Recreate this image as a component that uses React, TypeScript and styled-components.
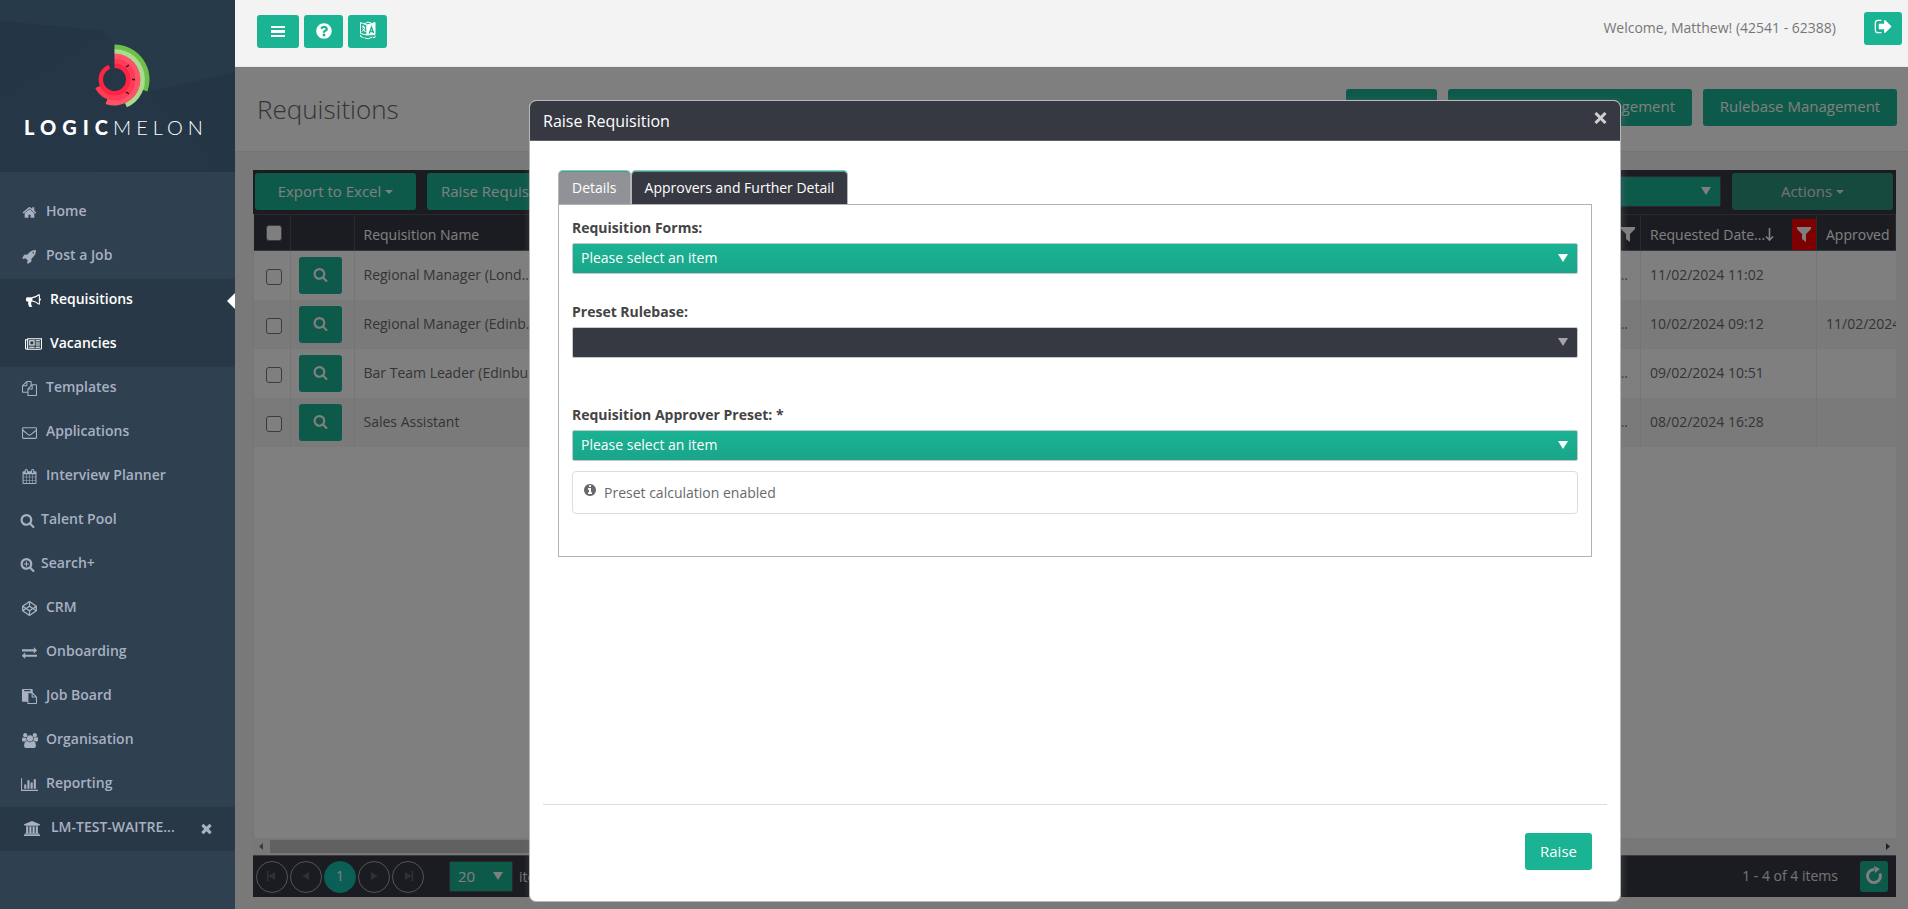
import React from 'react';
import styled, { createGlobalStyle, css } from 'styled-components';
import { FaCodepen, FaQuestionCircle } from 'react-icons/fa';

const green = '#1ab394';
const dark = '#373942';

const GlobalStyle = createGlobalStyle`
  *, *::before, *::after { box-sizing: border-box; }
  body {
    margin: 0;
    background: #2f4050;
    color: #676a6c;
    font-family: 'Open Sans', 'Noto Sans', sans-serif;
    font-size: 14px;
    line-height: 20px;
  }
  button, select, input { font: inherit; margin: 0; }
  ul { list-style: none; margin: 0; padding: 0; }
`;

/* ---------- icons ---------- */

const paths = {
  home: 'M1472 992v480q0 26-19 45t-45 19h-384v-384h-256v384h-384q-26 0-45-19t-19-45v-480q0-1 .5-3t.5-3l575-474 575 474q1 2 1 6zm223-69l-62 74q-8 9-21 11h-3q-13 0-21-7l-692-577-692 577q-12 8-24 7-13-2-21-11l-62-74q-8-10-7-23.5t11-21.5l719-599q32-26 76-26t76 26l244 204v-195q0-14 9-23t23-9h192q14 0 23 9t9 23v408l219 182q10 8 11 21.5t-7 23.5z',
  rocket: 'M1440 448q0-40-28-68t-68-28-68 28-28 68 28 68 68 28 68-28 28-68zm224-288q0 249-75.5 430.5t-253.5 360.5q-81 80-195 176l-20 379q-2 16-16 26l-384 224q-7 4-16 4-12 0-23-9l-64-64q-13-14-8-32l85-276-281-281-276 85q-3 1-9 1-14 0-23-9l-64-64q-17-19-5-39l224-384q10-14 26-16l379-20q96-114 176-195 188-187 358-258t431-71q14 0 24 9.5t10 22.5z',
  bullhorn: 'M1664 640q53 0 90.5 37.5t37.5 90.5-37.5 90.5-90.5 37.5v384q0 52-38 90t-90 38q-417-347-812-380-58 19-91 66t-31 100.5 40 92.5q-20 33-23 65.5t6 58 33.5 55 48 50 61.5 50.5q-29 58-111.5 83t-168.5 11.5-132-55.5q-7-23-29.5-87.5t-32-94.5-23-89-15-101 3.5-98.5 22-110.5h-122q-66 0-113-47t-47-113v-192q0-66 47-113t113-47h480q435 0 896-384 52 0 90 38t38 90v384zm-128 604v-954q-394 302-768 343v270q377 42 768 341z',
  newspaper: 'M1024 512h-384v384h384v-384zm128 640v128h-640v-128h640zm0-768v640h-640v-640h640zm640 768v128h-512v-128h512zm0-256v128h-512v-128h512zm0-256v128h-512v-128h512zm0-256v128h-512v-128h512zm-1536 960v-960h-128v960q0 26 19 45t45 19 45-19 19-45zm1664 0v-1088h-1536v1088q0 33-11 64h1483q26 0 45-19t19-45zm128-1216v1216q0 80-56 136t-136 56h-1664q-80 0-136-56t-56-136v-1088h256v-128h1792z',
  files: 'M1696 384q40 0 68 28t28 68v1216q0 40-28 68t-68 28h-960q-40 0-68-28t-28-68v-288h-544q-40 0-68-28t-28-68v-672q0-40 20-88t48-76l408-408q28-28 76-48t88-20h416q40 0 68 28t28 68v328q68-40 128-40h416zm-544 213l-299 299h299v-299zm-640-384l-299 299h299v-299zm196 647l316-316v-416h-384v416q0 40-28 68t-68 28h-416v640h512v-256q0-40 20-88t48-76zm956 804v-1152h-384v416q0 40-28 68t-68 28h-416v640h896z',
  envelope: 'M1664 1504v-768q-32 36-69 66-268 206-426 338-51 43-83 67t-86.5 48.5-102.5 24.5h-2q-48 0-102.5-24.5t-86.5-48.5-83-67q-158-132-426-338-37-30-69-66v768q0 13 9.5 22.5t22.5 9.5h1472q13 0 22.5-9.5t9.5-22.5zm0-1051v-24.5l-.5-13-3-12.5-5.5-9-9-7.5-14-2.5h-1472q-13 0-22.5 9.5t-9.5 22.5q0 168 147 284 193 152 401 317 6 5 35 29.5t46 37.5 44.5 31.5 50.5 27.5 43 9h2q20 0 43-9t50.5-27.5 44.5-31.5 46-37.5 35-29.5q208-165 401-317 54-43 100.5-115.5t46.5-131.5zm128-37v1088q0 66-47 113t-113 47h-1472q-66 0-113-47t-47-113v-1088q0-66 47-113t113-47h1472q66 0 113 47t47 113z',
  calendar: 'M192 1664h288v-288h-288v288zm352 0h320v-288h-320v288zm-352-352h288v-320h-288v320zm352 0h320v-320h-320v320zm-352-384h288v-288h-288v288zm736 736h320v-288h-320v288zm-384-736h320v-288h-320v288zm768 736h288v-288h-288v288zm-384-352h320v-320h-320v320zm-352-864v-288q0-13-9.5-22.5t-22.5-9.5h-64q-13 0-22.5 9.5t-9.5 22.5v288q0 13 9.5 22.5t22.5 9.5h64q13 0 22.5-9.5t9.5-22.5zm736 864h288v-320h-288v320zm-384-384h320v-288h-320v288zm384 0h288v-288h-288v288zm32-480v-288q0-13-9.5-22.5t-22.5-9.5h-64q-13 0-22.5 9.5t-9.5 22.5v288q0 13 9.5 22.5t22.5 9.5h64q13 0 22.5-9.5t9.5-22.5zm384-64v1280q0 52-38 90t-90 38h-1408q-52 0-90-38t-38-90v-1280q0-52 38-90t90-38h128v-96q0-66 47-113t113-47h64q66 0 113 47t47 113v96h384v-96q0-66 47-113t113-47h64q66 0 113 47t47 113v96h128q52 0 90 38t38 90z',
  search: 'M1216 832q0-185-131.5-316.5t-316.5-131.5-316.5 131.5-131.5 316.5 131.5 316.5 316.5 131.5 316.5-131.5 131.5-316.5zm512 832q0 52-38 90t-90 38q-54 0-90-38l-343-342q-179 124-399 124-143 0-273.5-55.5t-225-150-150-225-55.5-273.5 55.5-273.5 150-225 225-150 273.5-55.5 273.5 55.5 225 150 150 225 55.5 273.5q0 220-124 399l343 343q37 37 37 90z',
  searchPlus: 'M1088 800v64q0 13-9.5 22.5t-22.5 9.5h-224v224q0 13-9.5 22.5t-22.5 9.5h-64q-13 0-22.5-9.5t-9.5-22.5v-224h-224q-13 0-22.5-9.5t-9.5-22.5v-64q0-13 9.5-22.5t22.5-9.5h224v-224q0-13 9.5-22.5t22.5-9.5h64q13 0 22.5 9.5t9.5 22.5v224h224q13 0 22.5 9.5t9.5 22.5zm128 32q0-185-131.5-316.5t-316.5-131.5-316.5 131.5-131.5 316.5 131.5 316.5 316.5 131.5 316.5-131.5 131.5-316.5zm512 832q0 53-37.5 90.5t-90.5 37.5q-54 0-90-38l-343-342q-179 124-399 124-143 0-273.5-55.5t-225-150-150-225-55.5-273.5 55.5-273.5 150-225 225-150 273.5-55.5 273.5 55.5 225 150 150 225 55.5 273.5q0 220-124 399l343 343q37 37 37 90z',
  exchange: 'M1792 1184v192q0 13-9.5 22.5t-22.5 9.5h-1376v192q0 13-9.5 22.5t-22.5 9.5q-12 0-24-10l-319-320q-9-9-9-22 0-14 9-23l320-320q9-9 23-9 13 0 22.5 9.5t9.5 22.5v192h1376q13 0 22.5 9.5t9.5 22.5zm0-544q0 14-9 23l-320 320q-9 9-23 9-13 0-22.5-9.5t-9.5-22.5v-192h-1376q-13 0-22.5-9.5t-9.5-22.5v-192q0-13 9.5-22.5t22.5-9.5h1376v-192q0-14 9-23t23-9q12 0 24 10l319 319q9 9 9 23z',
  paste: 'M768 1664h896v-640h-416q-40 0-68-28t-28-68v-416h-384v1152zm256-1440v-64q0-13-9.5-22.5t-22.5-9.5h-704q-13 0-22.5 9.5t-9.5 22.5v64q0 13 9.5 22.5t22.5 9.5h704q13 0 22.5-9.5t9.5-22.5zm256 672h299l-299-299v299zm512 128v672q0 40-28 68t-68 28h-960q-40 0-68-28t-28-68v-160h-544q-40 0-68-28t-28-68v-1344q0-40 28-68t68-28h1088q40 0 68 28t28 68v328q21 13 36 28l408 408q28 28 48 76t20 88z',
  users: 'M593 896q-162 5-265 128h-134q-82 0-138-40.5t-56-118.5q0-353 124-353 6 0 43.5 21t97.5 42.5 119 21.5q67 0 133-23-5 37-5 66 0 159 93 287zm1071 637q0 120-73 189.5t-194 69.5h-874q-121 0-194-69.5t-73-189.5q0-53 3.5-103.5t14-109 26.5-108.5 43-97.5 62-81 85.5-53.5 111.5-20q10 0 43 21.5t73 48 107 48 135 21.5 135-21.5 107-48 73-48 43-21.5q61 0 111.5 20t85.5 53.5 62 81 43 97.5 26.5 108.5 14 109 3.5 103.5zm-1024-1277q0 106-75 181t-181 75-181-75-75-181 75-181 181-75 181 75 75 181zm704 384q0 159-112.5 271.5t-271.5 112.5-271.5-112.5-112.5-271.5 112.5-271.5 271.5-112.5 271.5 112.5 112.5 271.5zm576 225q0 78-56 118.5t-138 40.5h-134q-103-123-265-128 93-128 93-287 0-29-5-66 66 23 133 23 59 0 119-21.5t97.5-42.5 43.5-21q124 0 124 353zm-128-609q0 106-75 181t-181 75-181-75-75-181 75-181 181-75 181 75 75 181z',
  chart: 'M640 896v512h-256v-512h256zm384-512v1024h-256v-1024h256zm1024 1152v128h-2048v-1536h128v1408h1920zm-640-896v768h-256v-768h256zm384-384v1152h-256v-1152h256z',
  bank: 'M960 0l960 384v128h-128q0 26-20.5 45t-48.5 19h-1526q-28 0-48.5-19t-20.5-45h-128v-128zm-704 640h256v768h128v-768h256v768h128v-768h256v768h128v-768h256v768h59q28 0 48.5 19t20.5 45v64h-1664v-64q0-26 20.5-45t48.5-19h59v-768zm1595 960q28 0 48.5 19t20.5 45v128h-1920v-128q0-26 20.5-45t48.5-19h1782z',
  times: 'M1490 1322q0 40-28 68l-136 136q-28 28-68 28t-68-28l-294-294-294 294q-28 28-68 28t-68-28l-136-136q-28-28-28-68t28-68l294-294-294-294q-28-28-28-68t28-68l136-136q28-28 68-28t68 28l294 294 294-294q28-28 68-28t68 28l136 136q28 28 28 68t-28 68l-294 294 294 294q28 28 28 68z',
  signOut: 'M704 1440q0 4 1 20t.5 26.5-3 23.5-10 19.5-20.5 6.5h-320q-119 0-203.5-84.5t-84.5-203.5v-704q0-119 84.5-203.5t203.5-84.5h320q13 0 22.5 9.5t9.5 22.5q0 4 1 20t.5 26.5-3 23.5-10 19.5-20.5 6.5h-320q-66 0-113 47t-47 113v704q0 66 47 113t113 47h312l11.5 1 11.5 3 8 5.5 7 9 2 13.5zm928-544q0 26-19 45l-544 544q-19 19-45 19t-45-19-19-45v-288h-448q-26 0-45-19t-19-45v-384q0-26 19-45t45-19h448v-288q0-26 19-45t45-19 45 19l544 544q19 19 19 45z',
  info: 'M1152 1376v-160q0-14-9-23t-23-9h-96v-512q0-14-9-23t-23-9h-320q-14 0-23 9t-9 23v160q0 14 9 23t23 9h96v320h-96q-14 0-23 9t-9 23v160q0 14 9 23t23 9h448q14 0 23-9t9-23zm-128-896v-160q0-14-9-23t-23-9h-192q-14 0-23 9t-9 23v160q0 14 9 23t23 9h192q14 0 23-9t9-23zm640 416q0 209-103 385.5t-279.5 279.5-385.5 103-385.5-103-279.5-279.5-103-385.5 103-385.5 279.5-279.5 385.5-103 385.5 103 279.5 279.5 103 385.5z',
};

type IconName = keyof typeof paths;

const Icon = ({ name, size = 14, box = 1792 }: { name: IconName; size?: number; box?: number }) => (
  <svg width={Math.round((size * box) / 1792)} height={size} viewBox={`0 0 ${box} 1792`} fill="currentColor" aria-hidden="true">
    <path d={paths[name]} />
  </svg>
);

const Triangle = ({ w = 10, h = 8 }: { w?: number; h?: number }) => (
  <svg width={w} height={h} viewBox="0 0 10 8" preserveAspectRatio="none" fill="currentColor" aria-hidden="true">
    <path d="M0 0h10L5 8z" />
  </svg>
);

const Funnel = () => (
  <svg width="14" height="15" viewBox="0 0 14 15" fill="currentColor" aria-hidden="true">
    <path d="M0 0h14v2L9 7v8l-4-3V7L0 2z" />
  </svg>
);

const TranslateIcon = () => (
  <svg width="18" height="19" viewBox="0 0 18 19" fill="none" stroke="#fff" aria-hidden="true">
    <path d="M1.500 1.500 8 4v10l-6.500-1.500z" />
    <path d="M8 4 16 1.500v12L8 14z" fill="#fff" />
    <path d="m5 3 4-2 3 1M1.500 14v1.500l3 1M5.500 17q3.500 2 8-1M16 14.500v2h-2" />
    <path d="m3 5.500 3 1M4.500 4.500v2M5.800 6.500q-.5 3-3 4M3.500 7.500 6.500 11" />
    <path d="m10.300 12.500 2.200-6.500 2.200 6M11 10.500h3" stroke={green} strokeWidth="1.300" />
  </svg>
);

const RefreshIcon = () => (
  <svg width="18" height="19" viewBox="0 0 18 19" fill="none" aria-hidden="true">
    <path d="M9 3.500A6.500 6.500 0 1 0 15 7.500" stroke="#fff" strokeWidth="3" />
    <path d="m9 0 6 3-5 4z" fill="#fff" />
  </svg>
);

const PagerArrow = ({ flip, bar }: { flip?: boolean; bar?: boolean }) => (
  <svg width="10" height="10" viewBox="0 0 10 10" fill="currentColor" aria-hidden="true">
    <g transform={flip ? 'matrix(-1 0 0 1 10 0)' : undefined}>
      <path d="M8 1v8L1.500 5z" />
      {bar && <path d="M0 0h1.500v10H0z" />}
    </g>
  </svg>
);

/* ---------- shared controls ---------- */

const Button = styled.button<{ $width?: number; $dim?: boolean }>`
  display: inline-flex;
  align-items: center;
  justify-content: center;
  gap: 4px;
  flex: none;
  height: 37px;
  width: ${(p) => (p.$width ? `${p.$width}px` : 'auto')};
  padding: 0 14px 2px;
  border: 0;
  border-radius: 3px;
  background: ${(p) => (p.$dim ? '#2f957f' : green)};
  color: ${(p) => (p.$dim ? '#e4e4e4' : '#fff')};
  font-size: 15px;
  white-space: nowrap;
  > svg { margin-top: 2px; }
`;

const IconButton = styled.button<{ $w: number; $h: number }>`
  display: inline-flex;
  align-items: center;
  justify-content: center;
  flex: none;
  width: ${(p) => p.$w}px;
  height: ${(p) => p.$h}px;
  padding: 0 0 2px;
  border: 0;
  border-radius: 3px;
  background: ${green};
  color: #fff;
`;

const SelectWrap = styled.div<{ $width?: number; $off?: boolean }>`
  position: relative;
  display: flex;
  height: 31px;
  width: ${(p) => (p.$width ? `${p.$width}px` : '100%')};
  color: ${(p) => (p.$off ? '#a5a5a9' : '#fff')};
  > svg {
    position: absolute;
    right: 10px;
    top: 11px;
    pointer-events: none;
  }
`;

const Select = styled.select<{ $tone: 'light' | 'dark' | 'bar' }>`
  appearance: none;
  width: 100%;
  height: 100%;
  padding: 0 28px 1px 8px;
  border: 1px solid #c5c7ca;
  border-radius: 2px;
  background: linear-gradient(#1ab394, #1aa58a);
  color: #fff;
  opacity: 1;
  ${(p) => p.$tone === 'dark' && css`background: ${dark};`}
  ${(p) => p.$tone === 'bar' && css`
    background: ${green};
    border-color: #51545c;
    font-size: 15px;
  `}
`;

/* ---------- sidebar ---------- */

const Page = styled.div`
  display: grid;
  grid-template-columns: 235px minmax(0, 1fr);
  min-height: 100vh;
`;

const Sidebar = styled.aside`
  background: #2f4050;
`;

const Brand = styled.div`
  height: 172px;
  background: #253747;
  > svg { display: block; width: 100%; height: 100%; }
`;

const Nav = styled.ul`
  padding-top: 19px;
`;

const NavItem = styled.li<{ $tone?: 'active' | 'client' }>`
  position: relative;
  height: 44px;
  background: ${(p) => (p.$tone ? '#293846' : 'transparent')};
`;

const NavLink = styled.a<{ $active?: boolean; $left: number; $gap: number }>`
  display: flex;
  align-items: center;
  gap: ${(p) => p.$gap}px;
  height: 100%;
  padding: 0 10px 4px ${(p) => p.$left}px;
  color: ${(p) => (p.$active ? '#fff' : '#a7b1c2')};
  font-weight: 600;
  text-decoration: none;
  > svg { flex: none; margin-top: 2px; }
`;

const Pointer = styled.span`
  position: absolute;
  right: 0;
  top: 14px;
  border: 8px solid transparent;
  border-left: 0;
  border-right-color: #fff;
`;

const CloseClient = styled.button`
  position: absolute;
  right: 21px;
  top: 14px;
  display: flex;
  padding: 0;
  border: 0;
  background: none;
  color: #a7b1c2;
`;

/* ---------- main column ---------- */

const Main = styled.div`
  display: flex;
  flex-direction: column;
  background: #f3f3f4;
`;

const TopBar = styled.header`
  display: flex;
  align-items: flex-start;
  gap: 5px;
  height: 67px;
  padding: 12px 6px 0 22px;
  border-bottom: 1px solid #e7eaec;
  > button { margin-top: 3px; }
  > button:last-child { margin: 0 0 0 23px; padding-bottom: 4px; }
`;

const Welcome = styled.span`
  margin: 6px 0 0 auto;
  color: #777;
`;

const Content = styled.div`
  position: relative;
  flex: 1;
  display: flex;
  flex-direction: column;
`;

const Heading = styled.div`
  display: flex;
  align-items: center;
  gap: 11px;
  height: 85px;
  padding: 0 11px 4px 22px;
  border-bottom: 1px solid #e7eaec;
  background: #fff;
`;

const Title = styled.h1`
  margin: 3px auto 0 0;
  font-size: 26px;
  line-height: 32px;
  font-weight: 300;
`;

const Grid = styled.section`
  flex: 1;
  display: flex;
  flex-direction: column;
  margin: 18px 12px 12px 18px;
  background: #fff;
  color: #676a6c;
`;

const Toolbar = styled.div`
  display: flex;
  align-items: center;
  gap: 11px;
  height: 44px;
  padding: 0 3px 1px 2px;
  background: ${dark};
`;

const Spacer = styled.span`
  flex: 1;
`;

const TableArea = styled.div`
  flex: 1;
  overflow: hidden;
  border-left: 1px solid #e9e9e9;
`;

const Table = styled.table`
  width: 100%;
  table-layout: fixed;
  border-collapse: collapse;
  th, td {
    padding: 0 0 0 9px;
    overflow: hidden;
    white-space: nowrap;
    text-align: left;
    font-weight: 400;
    border-left: 1px solid #ebebeb;
  }
  th:first-child, td:first-child { border-left: 0; }
  th {
    height: 36px;
    background: ${dark};
    color: #fff;
    border: 1px solid #515459;
    border-bottom-color: #6a6c72;
  }
  td { height: 49px; }
  td:nth-child(2) { padding-left: 8px; }
  tbody tr:nth-child(even) { background: #f5f5f5; }
`;

const HeadCell = styled.div`
  display: flex;
  align-items: center;
  height: 34px;
  padding-top: 4px;
`;

const FilterBox = styled.span<{ $on?: boolean }>`
  display: flex;
  align-items: center;
  justify-content: center;
  width: 24px;
  height: 32px;
  margin-left: auto;
  background: ${(p) => (p.$on ? '#f00' : 'transparent')};
`;

const Check = styled.input`
  appearance: none;
  display: block;
  width: 16px;
  height: 16px;
  margin: 4px 0 0 3px;
  border: 1px solid #767676;
  border-radius: 3px;
  background: #fff;
  th & { margin-top: 0; }
`;

const Dots = styled.div`
  padding-right: 12px;
  text-align: right;
`;

const ScrollTrack = styled.div`
  display: flex;
  align-items: center;
  justify-content: space-between;
  height: 17px;
  padding: 0 6px;
  background: #f1f1f1;
`;

const ScrollThumb = styled.div`
  width: 50%;
  height: 13px;
  margin: 0 auto 0 7px;
  background: #c1c1c1;
`;

const Pager = styled.div`
  display: flex;
  align-items: center;
  gap: 2px;
  height: 42px;
  padding: 0 8px 0 3px;
  background: ${dark};
  border-top: 1px solid #74767c;
  color: #e6e6e6;
`;

const PageButton = styled.button<{ $current?: boolean }>`
  display: flex;
  align-items: center;
  justify-content: center;
  flex: none;
  width: 32px;
  height: 32px;
  padding: 0 0 1px;
  border: 1px solid ${(p) => (p.$current ? '#14bfae' : '#a6a8ad')};
  border-radius: 50%;
  background: ${(p) => (p.$current ? '#14bfae' : 'transparent')};
  color: ${(p) => (p.$current ? '#fff' : '#5f626a')};
`;

const PageSize = styled.label`
  display: flex;
  align-items: center;
  gap: 6px;
  margin-left: 23px;
`;

const PagerInfo = styled.span`
  margin: 0 20px 2px auto;
`;

/* ---------- dialog ---------- */

const Overlay = styled.div`
  position: absolute;
  inset: 0;
  display: flex;
  padding: 33px 287px 7px 294px;
  background: rgba(0, 0, 0, 0.5);
`;

const Dialog = styled.section`
  flex: 1;
  display: flex;
  flex-direction: column;
  min-width: 0;
  border: 1px solid #b7b8ba;
  border-radius: 7px;
  background: #fff;
  box-shadow: 1px 1px 7px 1px rgba(128, 128, 128, 0.3);
  overflow: hidden;
`;

const DialogTitle = styled.header`
  display: flex;
  align-items: center;
  justify-content: space-between;
  height: 40px;
  padding: 0 13px;
  background: ${dark};
  border-bottom: 1px solid #606269;
  color: #fff;
  h2 { margin: 0; font-size: 16px; font-weight: 400; }
  button {
    display: flex;
    padding: 0;
    margin-bottom: 5px;
    border: 0;
    background: none;
    color: #d0d0d3;
  }
`;

const DialogBody = styled.div`
  flex: 1;
  padding: 29px 28px 0 28px;
`;

const Tabs = styled.div`
  display: flex;
`;

const Tab = styled.button<{ $selected?: boolean }>`
  height: 34px;
  padding: 0 13px;
  border: 1px solid #b4b5b8;
  border-bottom: 0;
  border-radius: 5px 5px 0 0;
  box-shadow: inset 0 1px 0 ${green};
  background: ${(p) => (p.$selected ? '#919297' : dark)};
  color: #fff;
`;

const Panel = styled.div`
  height: 353px;
  padding: 13px 13px 0;
  border: 1px solid #b3b3b3;
`;

const Field = styled.div<{ $after: number }>`
  margin-bottom: ${(p) => p.$after}px;
`;

const FieldLabel = styled.label`
  display: block;
  height: 25px;
  color: #444;
  font-weight: 700;
`;

const Notice = styled.div`
  display: flex;
  align-items: center;
  gap: 7px;
  height: 43px;
  padding: 0 10px;
  border: 1px solid #ddd;
  border-radius: 4px;
  > svg { margin-bottom: 6px; }
`;

const DialogFooter = styled.footer`
  display: flex;
  justify-content: flex-end;
  height: 97px;
  margin: 0 13px;
  padding: 28px 15px 0;
  border-top: 1px solid #ddd;
`;

/* ---------- brand drawing ---------- */

const polar = (r: number, deg: number) => {
  const a = (deg * Math.PI) / 180;
  return `${(114.5 + r * Math.sin(a)).toFixed(2)} ${(79.5 - r * Math.cos(a)).toFixed(2)}`;
};

const ring = (r0: number, r1: number, end: number) => {
  const large = end > 180 ? 1 : 0;
  return `M${polar(r1, 0)}A${r1} ${r1} 0 ${large} 1 ${polar(r1, end)}L${polar(r0, end)}A${r0} ${r0} 0 ${large} 0 ${polar(r0, 0)}Z`;
};

const Logo = () => (
  <svg viewBox="0 0 235 172" role="img" aria-label="LogicMelon">
    <path d="M0 0h135L103 31 0 21z" fill="#273a49" />
    <path d="M135 0h100v150l-26-2L103 31z" fill="#273a49" />
    <path d="M103 31 0 21v75l70-42z" fill="#243646" />
    <path d="M209 148 150 92l85-20v100h-26z" fill="#243646" />
    <path d="M0 172v-60l60 28 40 32z" fill="#263848" />
    <path d={ring(30, 35, 110)} fill="#6cc04a" />
    <path d={ring(25.5, 30.5, 156)} fill="#a9dc8f" />
    <path d={ring(20.5, 26, 200)} fill="#ff5468" />
    <path d={ring(15.5, 21, 246)} fill="#ff3b55" />
    <path d={ring(11.5, 16, 338)} fill="#ff2344" />
    <path d="m126 67 3-2m3 14.500h3M126 92l3 2" stroke="#2b1420" strokeWidth="1.500" />
    <text x="24" y="135" fill="#fff" fontFamily="Lato, sans-serif" fontSize="20" fontWeight="900" letterSpacing="6">LOGIC</text>
    <text x="113" y="135" fill="#fff" fontFamily="Lato, sans-serif" fontSize="20" fontWeight="300" letterSpacing="5">MELON</text>
  </svg>
);

/* ---------- data ---------- */

type NavEntry = { label: string; icon: IconName | 'codepen'; left: number; gap: number; box?: number; active?: boolean };

const navEntries: NavEntry[] = [
  { label: 'Home', icon: 'home', left: 22, gap: 9 },
  { label: 'Post a Job', icon: 'rocket', left: 22, gap: 9 },
  { label: 'Requisitions', icon: 'bullhorn', left: 26, gap: 9, active: true },
  { label: 'Vacancies', icon: 'newspaper', left: 25, gap: 8, box: 2048, active: true },
  { label: 'Templates', icon: 'files', left: 22, gap: 9 },
  { label: 'Applications', icon: 'envelope', left: 22, gap: 9 },
  { label: 'Interview Planner', icon: 'calendar', left: 22, gap: 9 },
  { label: 'Talent Pool', icon: 'search', left: 20, gap: 6 },
  { label: 'Search+', icon: 'searchPlus', left: 20, gap: 6 },
  { label: 'CRM', icon: 'codepen', left: 22, gap: 9 },
  { label: 'Onboarding', icon: 'exchange', left: 22, gap: 9 },
  { label: 'Job Board', icon: 'paste', left: 22, gap: 9 },
  { label: 'Organisation', icon: 'users', left: 22, gap: 8, box: 1920 },
  { label: 'Reporting', icon: 'chart', left: 21, gap: 8, box: 2048 },
];

const rows = [
  { name: 'Regional Manager (Lond...', requested: '11/02/2024 11:02', approved: '' },
  { name: 'Regional Manager (Edinb...', requested: '10/02/2024 09:12', approved: '11/02/2024' },
  { name: 'Bar Team Leader (Edinbu...', requested: '09/02/2024 10:51', approved: '' },
  { name: 'Sales Assistant', requested: '08/02/2024 16:28', approved: '' },
];

const DropDown = ({ id, value, tone = 'light', width, label }: { id?: string; value: string; tone?: 'light' | 'dark' | 'bar'; width?: number; label?: string }) => (
  <SelectWrap $width={width} $off={tone === 'dark'}>
    <Select id={id} $tone={tone} aria-label={label} disabled={tone === 'dark'}>
      <option>{value}</option>
    </Select>
    <Triangle />
  </SelectWrap>
);

export default function App() {
  return (
    <Page>
      <GlobalStyle />
      <Sidebar>
        <Brand><Logo /></Brand>
        <Nav>
          {navEntries.map((n) => (
            <NavItem key={n.label} $tone={n.active ? 'active' : undefined}>
              <NavLink href="#" $active={n.active} $left={n.left} $gap={n.gap}>
                {n.icon === 'codepen' ? <FaCodepen size={15} /> : <Icon name={n.icon} size={15} box={n.box} />}
                {n.label}
              </NavLink>
              {n.label === 'Requisitions' && <Pointer />}
            </NavItem>
          ))}
          <NavItem $tone="client">
            <NavLink href="#" $left={24} $gap={11}>
              <Icon name="bank" size={15} box={1920} />
              LM-TEST-WAITRE...
            </NavLink>
            <CloseClient aria-label="Close client"><Icon name="times" size={15} /></CloseClient>
          </NavItem>
        </Nav>
      </Sidebar>

      <Main>
        <TopBar>
          <IconButton $w={42} $h={33} aria-label="Menu">
            <svg width="14" height="12" viewBox="0 0 14 12" fill="#fff"><path d="M0 1h14v2H0zM0 5h14v3H0zM0 10h14v2H0z" /></svg>
          </IconButton>
          <IconButton $w={39} $h={33} aria-label="Help"><FaQuestionCircle size={16} /></IconButton>
          <IconButton $w={39} $h={33} aria-label="Language"><TranslateIcon /></IconButton>
          <Welcome>Welcome, Matthew! (42541 - 62388)</Welcome>
          <IconButton $w={38} $h={33} aria-label="Sign out"><Icon name="signOut" size={19} /></IconButton>
        </TopBar>

        <Content>
          <Heading>
            <Title>Requisitions</Title>
            <Button $width={91} aria-label="Settings" />
            <Button $width={244}>Approver Preset Management</Button>
            <Button $width={194}>Rulebase Management</Button>
          </Heading>

          <Grid>
            <Toolbar>
              <Button $width={161}>Export to Excel <Triangle w={8} h={4} /></Button>
              <Button>Raise Requisition</Button>
              <Spacer />
              <DropDown tone="bar" width={240} value="" label="Filter" />
              <Button $width={161} $dim>Actions <Triangle w={8} h={4} /></Button>
            </Toolbar>
            <TableArea>
              <Table>
                <colgroup>
                  <col width={36} />
                  <col width={64} />
                  <col width={220} />
                  <col />
                  <col width={150} />
                  <col width={176} />
                  <col width={79} />
                </colgroup>
                <thead>
                  <tr>
                    <th><Check type="checkbox" aria-label="Select all" /></th>
                    <th />
                    <th><HeadCell>Requisition Name</HeadCell></th>
                    <th />
                    <th><HeadCell><FilterBox><Funnel /></FilterBox></HeadCell></th>
                    <th>
                      <HeadCell>
                        Requested Date...
                        <svg width="9" height="14" viewBox="0 0 9 14" fill="none" stroke="currentColor" strokeWidth="1.600"><path d="M4.500 0v12M1 8.500 4.500 12 8 8.500" /></svg>
                        <FilterBox $on><Funnel /></FilterBox>
                      </HeadCell>
                    </th>
                    <th><HeadCell>Approved</HeadCell></th>
                  </tr>
                </thead>
                <tbody>
                  {rows.map((r) => (
                    <tr key={r.name}>
                      <td><Check type="checkbox" aria-label={`Select ${r.name}`} /></td>
                      <td><IconButton $w={43} $h={37} aria-label="View"><Icon name="search" size={15} /></IconButton></td>
                      <td>{r.name}</td>
                      <td />
                      <td><Dots>...</Dots></td>
                      <td>{r.requested}</td>
                      <td>{r.approved}</td>
                    </tr>
                  ))}
                </tbody>
              </Table>
            </TableArea>
            <ScrollTrack>
              <svg width="4" height="7" viewBox="0 0 4 7" fill="#777"><path d="M4 0v7L0 3.500z" /></svg>
              <ScrollThumb />
              <svg width="4" height="7" viewBox="0 0 4 7" fill="#444"><path d="M0 0v7l4-3.500z" /></svg>
            </ScrollTrack>
            <Pager>
              <PageButton aria-label="First page"><PagerArrow bar /></PageButton>
              <PageButton aria-label="Previous page"><PagerArrow /></PageButton>
              <PageButton $current>1</PageButton>
              <PageButton aria-label="Next page"><PagerArrow flip /></PageButton>
              <PageButton aria-label="Last page"><PagerArrow flip bar /></PageButton>
              <PageSize>
                <DropDown tone="bar" width={64} value="20" />
                items per page
              </PageSize>
              <PagerInfo>1 - 4 of 4 items</PagerInfo>
              <IconButton $w={28} $h={31} aria-label="Refresh"><RefreshIcon /></IconButton>
            </Pager>
          </Grid>

          <Overlay>
            <Dialog role="dialog" aria-labelledby="dialog-title">
              <DialogTitle>
                <h2 id="dialog-title">Raise Requisition</h2>
                <button aria-label="Close">
                  <svg width="13" height="12" viewBox="0 0 13 12" stroke="currentColor" strokeWidth="3" fill="none"><path d="m1.500 1 10 10M11.500 1l-10 10" /></svg>
                </button>
              </DialogTitle>
              <DialogBody>
                <Tabs role="tablist">
                  <Tab role="tab" aria-selected $selected>Details</Tab>
                  <Tab role="tab">Approvers and Further Detail</Tab>
                </Tabs>
                <Panel role="tabpanel">
                  <Field $after={28}>
                    <FieldLabel htmlFor="forms">Requisition Forms:</FieldLabel>
                    <DropDown id="forms" value="Please select an item" />
                  </Field>
                  <Field $after={47}>
                    <FieldLabel htmlFor="rulebase">Preset Rulebase:</FieldLabel>
                    <DropDown id="rulebase" value="" tone="dark" />
                  </Field>
                  <Field $after={10}>
                    <FieldLabel htmlFor="approver">Requisition Approver Preset: *</FieldLabel>
                    <DropDown id="approver" value="Please select an item" />
                  </Field>
                  <Notice><Icon name="info" />Preset calculation enabled</Notice>
                </Panel>
              </DialogBody>
              <DialogFooter>
                <Button $width={67}>Raise</Button>
              </DialogFooter>
            </Dialog>
          </Overlay>
        </Content>
      </Main>
    </Page>
  );
}
